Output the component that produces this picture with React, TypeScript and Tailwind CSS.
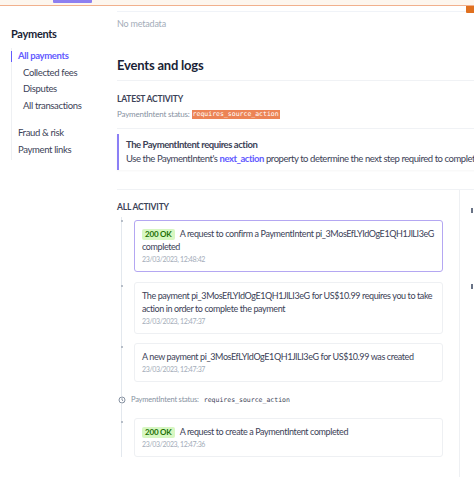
import type { ReactNode } from "react";

const font = "font-['Lato',_'Noto_Sans',_sans-serif]";
const mono = "font-['DejaVu_Sans_Mono',_'Liberation_Mono',_monospace]";

const navItems = [
  { label: "All payments", active: true, indent: false },
  { label: "Collected fees", indent: true },
  { label: "Disputes", indent: true },
  { label: "All transactions", indent: true },
];

const OkBadge = () => (
  <span className="mr-[5px] inline-block rounded-[2px] bg-[#d7f7c2] px-[3px] text-[8px] font-bold leading-[11px] tracking-[-0.2px] text-[#217005]">
    200 OK
  </span>
);

type EventCardProps = {
  children: ReactNode;
  time: string;
  active?: boolean;
  className?: string;
};

const EventCard = ({ children, time, active, className }: EventCardProps) => (
  <div className={`relative ${className ?? ""}`}>
    <span className="absolute left-[-13px] top-[3px] h-[2px] w-[2px] rounded-full bg-[#a3acb9]" />
    <div
      className={`rounded-[3px] border pb-[7px] pl-[7px] pr-[2px] pt-[6px] ${
        active ? "border-[#b4a7f2]" : "border-[#eef0f3]"
      }`}
    >
      <div className="text-[9px] leading-[13px] tracking-[-0.4px] text-[#3c4257]">{children}</div>
      <div className="mt-[1px] text-[7px] leading-[10px] tracking-[-0.35px] text-[#a3acb9]">{time}</div>
    </div>
  </div>
);

const StatusIcon = () => (
  <svg width="8" height="8" viewBox="0 0 16 16" fill="none" stroke="#8792a2" strokeWidth="2">
    <circle cx="8" cy="8" r="6" />
    <path d="M8 4.5V8l2.5 2" />
  </svg>
);

export default function App() {
  return (
    <div className={`relative h-[493px] w-[474px] overflow-hidden bg-white ${font}`}>
      {/* top bar */}
      <div className="flex h-[6px] border-b border-[#f1b08c] bg-[#fdf6ee]">
        <div className="ml-[53px] h-[3px] w-[39px] rounded-b-[1px] bg-[#8d7ff0]" />
      </div>
      <div className="absolute right-0 top-[6px] h-[7px] w-[8px] rounded-bl-[1px] bg-[#e0701f]" />

      <div className="flex">
        {/* sidebar */}
        <aside className="w-[117px] shrink-0 pl-[11px] pt-[21px]">
          <div className="text-[11px] font-bold leading-[14px] tracking-[-0.3px] text-[#1a1f36]">Payments</div>
          <div className="mt-[7px] border-l border-[#eef0f3] pb-[2px] text-[9.5px] tracking-[-0.35px]">
            {navItems.map((item) => (
              <div
                key={item.label}
                className={`relative h-[16.5px] leading-[16px] ${
                  item.indent ? "pl-[11px] text-[#3c4257]" : "pl-[6px]"
                } ${item.active ? "font-bold text-[#635bff]" : ""}`}
              >
                {item.active && (
                  <span className="absolute left-[-1px] top-[3px] h-[11px] w-[1px] bg-[#635bff]" />
                )}
                {item.label}
              </div>
            ))}
            <div className="mt-[11px] pl-[6px] leading-[16px] text-[#3c4257]">Fraud &amp; risk</div>
            <div className="pl-[6px] leading-[17px] text-[#3c4257]">Payment links</div>
          </div>
        </aside>

        {/* main */}
        <main className="mt-[5px] min-w-0 flex-1 border-t border-[#f0f3f8]">
          <div className="pt-[6px] text-[9px] leading-[12px] tracking-[-0.2px] text-[#a3acb9]">No metadata</div>

          <h2 className="mt-[26px] text-[13px] font-bold leading-[18px] tracking-[-0.2px] text-[#1a1f36]">
            Events and logs
          </h2>
          <div className="mt-[6px] border-t border-[#f0f2f5]" />

          <div className="mt-[12px] text-[8.5px] font-bold uppercase leading-[12px] tracking-[-0.2px] text-[#3c4257]">
            Latest activity
          </div>
          <div className="mt-[3px] flex items-center text-[8px] leading-[12px] tracking-[-0.2px] text-[#8792a2]">
            PaymentIntent status:
            <code
              className={`ml-[2px] bg-[#ec8456] px-[1px] text-[6.5px] leading-[9px] tracking-normal text-white ${mono}`}
            >
              requires_source_action
            </code>
          </div>
          <div className="mt-[8px] border-t border-[#f0f2f5]" />

          <div className="mt-[5px] w-[420px] border-l-2 border-[#8b7ff5] bg-white py-[4px] pl-[7px] text-[9.5px] leading-[14px] tracking-[-0.45px] text-[#3c4257] shadow-[0_1px_2px_rgba(0,0,0,0.04)]">
            <div className="whitespace-nowrap font-bold">The PaymentIntent requires action</div>
            <div className="whitespace-nowrap">
              Use the PaymentIntent's <span className="font-bold text-[#635bff]">next_action</span> property
              to determine the next step required to complete the payment.
            </div>
          </div>

          <div className="mt-[19px] flex border-t border-[#f0f2f5]">
            <section className="w-[342px] shrink-0 pb-[20px]">
              <div className="mt-[11px] text-[8.5px] font-bold uppercase leading-[12px] tracking-[-0.2px] text-[#3c4257]">
                All activity
              </div>

              <div className="ml-[4px] mt-[4px] border-l border-[#e3e8ee] pl-[12px] pr-[16px]">
                <EventCard time="23/03/2023, 12:48:42" active className="pt-[3px]">
                  <OkBadge />A request to confirm a PaymentIntent pi_3MosEfLYIdOgE1QH1JlLI3eG completed
                </EventCard>
                <EventCard time="23/03/2023, 12:47:37" className="mt-[10px]">
                  The payment pi_3MosEfLYIdOgE1QH1JlLI3eG for US$10.99 requires you to take action in order to
                  complete the payment
                </EventCard>
                <EventCard time="23/03/2023, 12:47:37" className="mt-[9px]">
                  A new payment pi_3MosEfLYIdOgE1QH1JlLI3eG for US$10.99 was created
                </EventCard>

                <div className="relative mt-[12px] flex items-center text-[7.5px] leading-[12px] tracking-[-0.2px] text-[#8792a2]">
                  <span className="absolute left-[-16.5px] top-[2px] bg-white">
                    <StatusIcon />
                  </span>
                  <span className="ml-[-3px]">PaymentIntent status:</span>
                  <code className={`ml-[5px] text-[6.5px] tracking-normal text-[#3c4257] ${mono}`}>
                    requires_source_action
                  </code>
                </div>

                <EventCard time="23/03/2023, 12:47:36" className="mt-[12px]">
                  <OkBadge />A request to create a PaymentIntent completed
                </EventCard>
              </div>
            </section>

            <aside className="flex-1 border-l border-[#eef0f3] pl-[11px]">
              <div className="mt-[18px] h-[5px] w-[2px] bg-[#697386]" />
              <div className="mt-[71px] h-[5px] w-[2px] bg-[#697386]" />
            </aside>
          </div>
        </main>
      </div>
    </div>
  );
}
